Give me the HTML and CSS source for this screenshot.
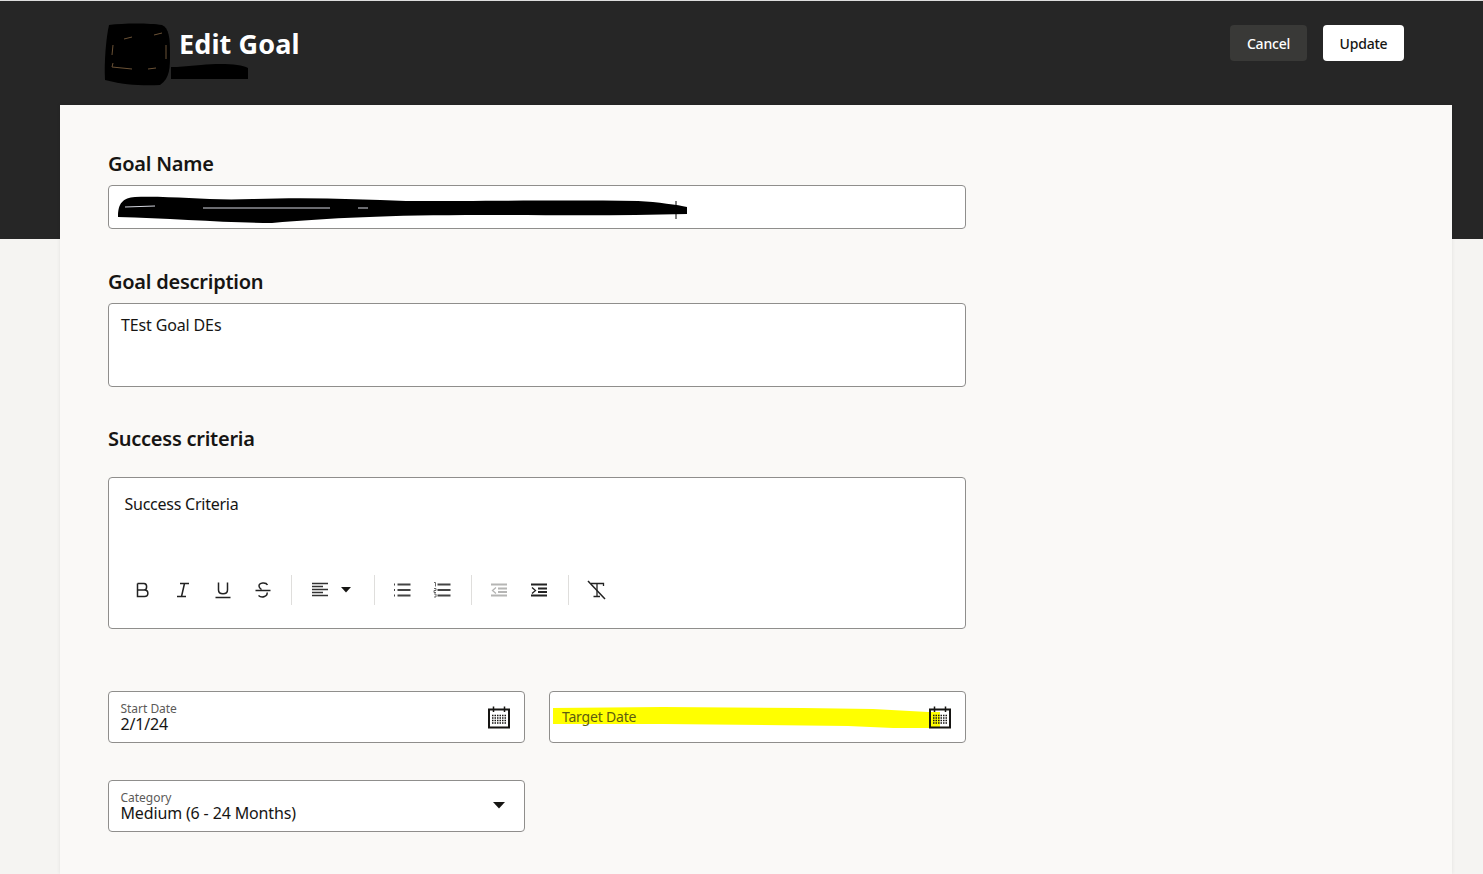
FILE: index.html
```html
<!DOCTYPE html>
<html lang="en">
<head>
<meta charset="utf-8">
<title>Edit Goal</title>
<link rel="stylesheet" href="styles.css">
</head>
<body>
<div class="hero">
  <header class="topbar">
    <div class="brand">
      <div class="avatar">
        <svg width="68" height="66" viewBox="0 0 68 66"><path d="M5 2C20 0 45 0 58 2C65 5 66 15 66 30C66 45 66 55 56 62C40 63 20 62 1 57C0 40 2 15 5 2Z" fill="#000"/><path d="M9 40L8 44L28 46M44 46L52 45M20 16L28 14M50 12L58 10M9 22L8 32M62 22L62 36" stroke="#6b5236" stroke-width="1" fill="none"/></svg>
      </div>
      <div class="brand-text">
        <h1 class="page-title">Edit Goal</h1>
        <svg class="sub-redact" width="78" height="16" viewBox="0 0 78 16"><path d="M0 3L6 3L30 1C50 -1 70 0 77 4L77 15L0 15Z" fill="#000"/></svg>
      </div>
    </div>
    <div class="actions">
      <button class="btn btn-dark">Cancel</button>
      <button class="btn btn-light">Update</button>
    </div>
  </header>
</div>

<main class="card">
  <section class="field-name">
    <h2 class="label">Goal Name</h2>
    <div class="box box-name">
      <svg class="name-redact" width="572" height="30" viewBox="0 0 572 30"><path d="M0 22C0 8 5 3 17 2C60 1 90 6 135 4C190 2 240 4 288 6C380 6 450 5 520 6C540 7 560 10 569 12L569 19C500 21 430 20 365 20C270 20 210 23 154 28C110 28 50 23 0 22Z" fill="#000"/><path d="M7 12L37 11M85 13H212M240 13H250" stroke="#d5d7e0" stroke-width="1"/><path d="M558 6V24" stroke="#000" stroke-width="1"/></svg>
    </div>
  </section>

  <section class="field-desc">
    <h2 class="label">Goal description</h2>
    <div class="box box-desc">TEst Goal DEs</div>
  </section>

  <section class="field-success">
    <h2 class="label">Success criteria</h2>
    <div class="box box-editor">
      <div class="editor-text">Success Criteria</div>
      <div class="toolbar">
        <span class="tool"><svg width="20" height="20" viewBox="0 0 20 20" fill="none" stroke="#222" stroke-width="1.5"><path d="M4.5 3.500V16.500H11.500C16 16.500 16 10 11.500 10H4.500M11 10C14.500 10 14.500 3.500 11 3.500H4.500"/></svg></span>
        <span class="tool"><svg width="20" height="20" viewBox="0 0 20 20" fill="none" stroke="#222" stroke-width="1.5"><path d="M7 3.500H16M4 16.500H13M11.500 3.500L8.500 16.500"/></svg></span>
        <span class="tool"><svg width="20" height="20" viewBox="0 0 20 20" fill="none" stroke="#222" stroke-width="1.500"><path d="M5.500 2.500V10C5.500 15 14.500 15 14.500 10V2.500M2.500 17.500H17.500"/></svg></span>
        <span class="tool"><svg width="20" height="20" viewBox="0 0 20 20" fill="none" stroke="#222" stroke-width="1.500"><path d="M14.500 5C13 2 6 2.500 6 6C6 7.500 7 8.500 8.500 9.500M2.500 10.500H17.500M14 12.500C15 16 9 18.500 5.500 15.500"/></svg></span>
        <span class="sep"></span>
        <span class="tool tool-align"><svg width="20" height="20" viewBox="0 0 20 20" stroke="#333" stroke-width="1.500"><path d="M2 3.500H18M2 6.500H13M2 9.500H18M2 12.500H13M2 15.500H18"/></svg><svg class="caret" width="10" height="6" viewBox="0 0 10 6"><path d="M0 0H10L5 5.500Z" fill="#161513"/></svg></span>
        <span class="sep sep-b"></span>
        <span class="tool"><svg width="20" height="20" viewBox="0 0 20 20" stroke="#444" stroke-width="2"><path d="M5.500 4.500H18.500M5.500 10H18.500M5.500 15.500H18.500"/><path d="M2 4.500H4M2 10H4M2 15.500H4" stroke-dasharray="1 1"/></svg></span>
        <span class="tool"><svg width="20" height="20" viewBox="0 0 20 20" stroke="#444" stroke-width="2"><path d="M5.500 4.500H18.500M5.500 10H18.500M5.500 15.500H18.500"/><path d="M2 2.500H3.500V6.500M2 8.500H4V10.500H2V12.500H4M2 14H4V17H2" stroke-width=".8" fill="none"/></svg></span>
        <span class="sep sep-c"></span>
        <span class="tool"><svg width="20" height="20" viewBox="0 0 20 20" stroke="#b5b5b4" stroke-width="2" fill="none"><path d="M2 4.500H18M9 8.500H18M9 12H18M2 15.500H18"/><path d="M7 7.500L3.500 10.500L7 13.500" stroke-width="1.300"/></svg></span>
        <span class="tool"><svg width="20" height="20" viewBox="0 0 20 20" stroke="#222" stroke-width="2" fill="none"><path d="M2 4.500H18M9 8.500H18M9 12H18M2 15.500H18"/><path d="M3 7.500L6.500 10.500L3 13.500" stroke-width="1.300"/></svg></span>
        <span class="sep sep-d"></span>
        <span class="tool"><svg width="22" height="22" viewBox="0 0 22 22" stroke="#222" fill="none"><path d="M5 4.500H17.500V7M11 4.500V17M7.500 17.500H14" stroke-width="1.300"/><path d="M2 2L19 20" stroke-width="1.500"/></svg></span>
      </div>
    </div>
  </section>

  <section class="date-row">
    <div class="box box-field">
      <div class="field-stack">
        <span class="mini">Start Date</span>
        <span class="value">2/1/24</span>
      </div>
      <svg class="cal" width="24" height="24" viewBox="0 0 24 24" fill="none" stroke="#161513"><path d="M2 4.500H22V22.500H2Z" stroke-width="2"/><path d="M6.500 1.500V7M17.500 1.500V7" stroke-width="1.500"/><path d="M5 10.500H19M5 13H19M5 15.500H19M5 18H19" stroke-width="1.500" stroke-dasharray="1.500 1"/></svg>
    </div>
    <div class="box box-field box-target">
      <svg class="highlight" width="388" height="24" viewBox="0 0 388 24"><path d="M0 2L110 1L250 2L320 3L375 6L387 6L387 22L340 22L295 20L110 18L0 18Z" fill="#ffff00"/></svg>
      <span class="placeholder">Target Date</span>
      <svg class="cal" width="24" height="24" viewBox="0 0 24 24" fill="none" stroke="#161513"><path d="M2 4.500H22V22.500H2Z" stroke-width="2"/><path d="M6.500 1.500V7M17.500 1.500V7" stroke-width="1.500"/><path d="M5 10.500H19M5 13H19M5 15.500H19M5 18H19" stroke-width="1.500" stroke-dasharray="1.500 1"/></svg>
    </div>
  </section>

  <section class="category-row">
    <div class="box box-field">
      <div class="field-stack">
        <span class="mini">Category</span>
        <span class="value">Medium (6 - 24 Months)</span>
      </div>
      <svg class="select-caret" width="12" height="7" viewBox="0 0 12 7"><path d="M0 0H12L6 6.500Z" fill="#161513"/></svg>
    </div>
  </section>
</main>
</body>
</html>
```

FILE: styles.css
```css
* { box-sizing: border-box; }
html, body { margin: 0; height: 874px; overflow: hidden; }
body {
  background: #f5f4f2;
  font-family: "Noto Sans", "Open Sans", sans-serif;
  color: #161513;
}
.hero {
  height: 239px;
  background: #262626;
  border-top: 1px solid #dddddd;
}
.topbar {
  display: flex;
  justify-content: space-between;
  align-items: flex-start;
  padding: 22px 79px 0 104px;
}
.brand { display: flex; align-items: flex-start; }
.avatar { width: 68px; height: 66px; }
.avatar svg { display: block; }
.brand-text { position: relative; margin-left: -1px; }
.page-title {
  margin: 0 0 0 8px;
  color: #fff;
  font-size: 27px;
  line-height: 42px;
  font-weight: 700;
  letter-spacing: 0.12px;
  white-space: nowrap;
}
.sub-redact { display: block; margin-top: -1px; }
.actions { display: flex; gap: 16px; margin-top: 2px; }
.btn {
  height: 36px;
  border: 0;
  border-radius: 4px;
  font-family: inherit;
  font-size: 14px;
  font-weight: 500;
  letter-spacing: -0.2px;
  padding: 0;
}
.btn-dark { width: 77px; background: #393937; color: #fff; }
.btn-light { width: 81px; background: #fff; color: #161513; }
.card {
  position: relative;
  width: 1392px;
  height: 769px;
  margin: -134px 0 0 60px;
  padding: 46px 0 0 48px;
  background: #faf9f7;
  box-shadow: 0 0 4px rgba(0,0,0,.08);
}
.label {
  margin: 0;
  font-size: 20px;
  line-height: 26px;
  font-weight: 600;
  letter-spacing: -0.25px;
  color: #161513;
}
.box {
  width: 858px;
  background: #fff;
  border: 1px solid #8f8e8c;
  border-radius: 4px;
}
.field-name .box { margin-top: 8px; }
.box-name { height: 44px; position: relative; }
.name-redact { position: absolute; left: 9px; top: 9px; }
.field-desc { margin-top: 40px; }
.box-desc {
  height: 84px;
  margin-top: 8px;
  padding: 10px 12px;
  font-size: 16px;
  line-height: 22px;
  letter-spacing: -0.14px;
}
.field-success { margin-top: 39px; }
.box-editor {
  height: 152px;
  margin-top: 25px;
  padding: 15px 15.5px 0;
}
.editor-text { font-size: 16px; line-height: 22px; letter-spacing: -0.25px; }
.toolbar {
  display: flex;
  align-items: center;
  height: 30px;
  margin-top: 60px;
  margin-left: -1.5px;
}
.tool {
  display: flex;
  align-items: center;
  justify-content: center;
  width: 40px;
  height: 30px;
  flex: none;
}
.sep { width: 1px; height: 30px; background: #dfdedc; margin: 0 9px 0 8px; flex: none; }
.tool-align { width: 70px; justify-content: flex-start; gap: 11px; padding-left: 9px; }
.sep-b { margin: 0 7px 0 3px; }
.sep-c { margin: 0 7px 0 9px; }
.sep-d { margin: 0 8px 0 9px; }
.date-row { display: flex; gap: 24px; margin-top: 62px; }
.date-row .box, .category-row .box { width: 417px; height: 52px; }
.box-field {
  display: flex;
  align-items: center;
  justify-content: space-between;
  padding: 0 13px 0 11.5px;
}
.box-target { position: relative; padding-left: 12px; }
.field-stack { display: flex; flex-direction: column; }
.mini { font-size: 12px; line-height: 13px; color: #5b5a58; letter-spacing: -0.03px; }
.value { font-size: 16px; line-height: 18px; letter-spacing: -0.15px; }
.placeholder {
  position: relative;
  font-size: 14px;
  line-height: 18px;
  color: #5e5c10;
  letter-spacing: -0.2px;
}
.highlight { position: absolute; left: 3px; top: 14px; }
.cal { position: relative; flex: none; }
.category-row { margin-top: 37px; }
.select-caret { margin-right: 6px; margin-top: -1px; }
```
